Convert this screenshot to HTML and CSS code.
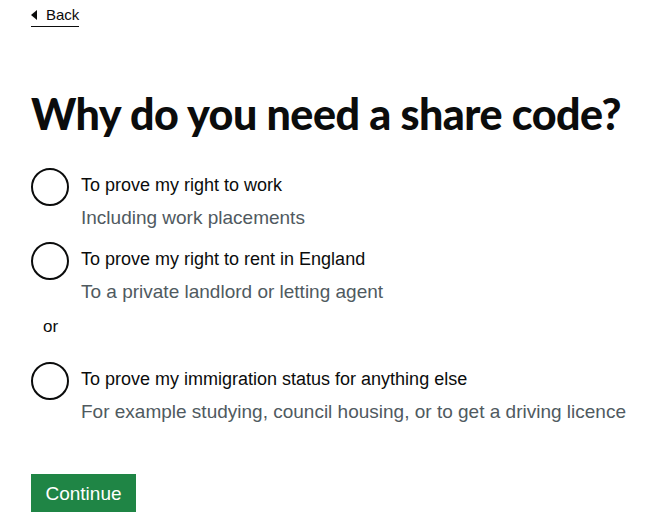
FILE: index.html
```html
<!DOCTYPE html>
<html lang="en">
<head>
<meta charset="utf-8">
<title>Why do you need a share code?</title>
<link rel="stylesheet" href="styles.css">
</head>
<body>
<div class="page">
  <a class="back" href="#"><span class="back-arrow"></span>Back</a>
  <form class="form">
    <fieldset class="fieldset">
      <legend class="heading">Why do you need a share code?</legend>
      <div class="radios">
        <div class="radio">
          <span class="circle"></span>
          <div class="radio-text">
            <div class="label">To prove my right to work</div>
            <div class="hint">Including work placements</div>
          </div>
        </div>
        <div class="radio">
          <span class="circle"></span>
          <div class="radio-text">
            <div class="label">To prove my right to rent in England</div>
            <div class="hint">To a private landlord or letting agent</div>
          </div>
        </div>
        <div class="divider">or</div>
        <div class="radio">
          <span class="circle"></span>
          <div class="radio-text">
            <div class="label">To prove my immigration status for anything else</div>
            <div class="hint">For example studying, council housing, or to get a driving licence</div>
          </div>
        </div>
      </div>
    </fieldset>
    <button class="button" type="button">Continue</button>
  </form>
</div>
</body>
</html>
```

FILE: styles.css
```css
html, body {
  margin: 0;
  padding: 0;
  background: #fff;
}
body {
  font-family: "Liberation Sans", Arial, sans-serif;
  color: #0b0c0c;
}
.page {
  padding: 6px 31px 0 31px;
}
.back {
  display: inline-flex;
  align-items: center;
  gap: 9px;
  font-size: 15px;
  line-height: 18px;
  color: #0b0c0c;
  text-decoration: none;
  border-bottom: 1px solid #0b0c0c;
  padding-bottom: 2px;
}
.back-arrow {
  width: 0;
  height: 0;
  border-top: 5px solid transparent;
  border-bottom: 5px solid transparent;
  border-right: 6px solid #0b0c0c;
}
.form {
  margin-top: 62px;
}
.fieldset {
  border: 0;
  margin: 0;
  padding: 0;
}
.heading {
  padding: 0;
  font-family: "Lato", "Liberation Sans", sans-serif;
  font-weight: 900;
  font-size: 43px;
  line-height: 50px;
  letter-spacing: -0.5px;
  margin-bottom: 29px;
}
.radios {
  display: flex;
  flex-direction: column;
}
.radio {
  display: flex;
  gap: 12px;
  align-items: flex-start;
  margin-bottom: 13px;
}
.circle {
  flex: none;
  width: 34px;
  height: 34px;
  border: 2px solid #0b0c0c;
  border-radius: 50%;
}
.radio-text {
  padding-top: 7px;
}
.label {
  font-size: 18px;
  line-height: 20px;
}
.hint {
  margin-top: 12px;
  font-size: 19px;
  line-height: 22px;
  color: #505a5f;
}
.divider {
  padding-left: 12px;
  font-size: 17px;
  line-height: 20px;
  margin: 1px 0 25px;
}
.button {
  margin-top: 38px;
  background: #1f8545;
  color: #fff;
  border: 0;
  box-shadow: 0 2px 0 #0a3b1e;
  font-family: "Liberation Sans", Arial, sans-serif;
  font-size: 19px;
  line-height: 22px;
  padding: 9px 0 7px;
  width: 105px;
  height: 38px;
}
```
